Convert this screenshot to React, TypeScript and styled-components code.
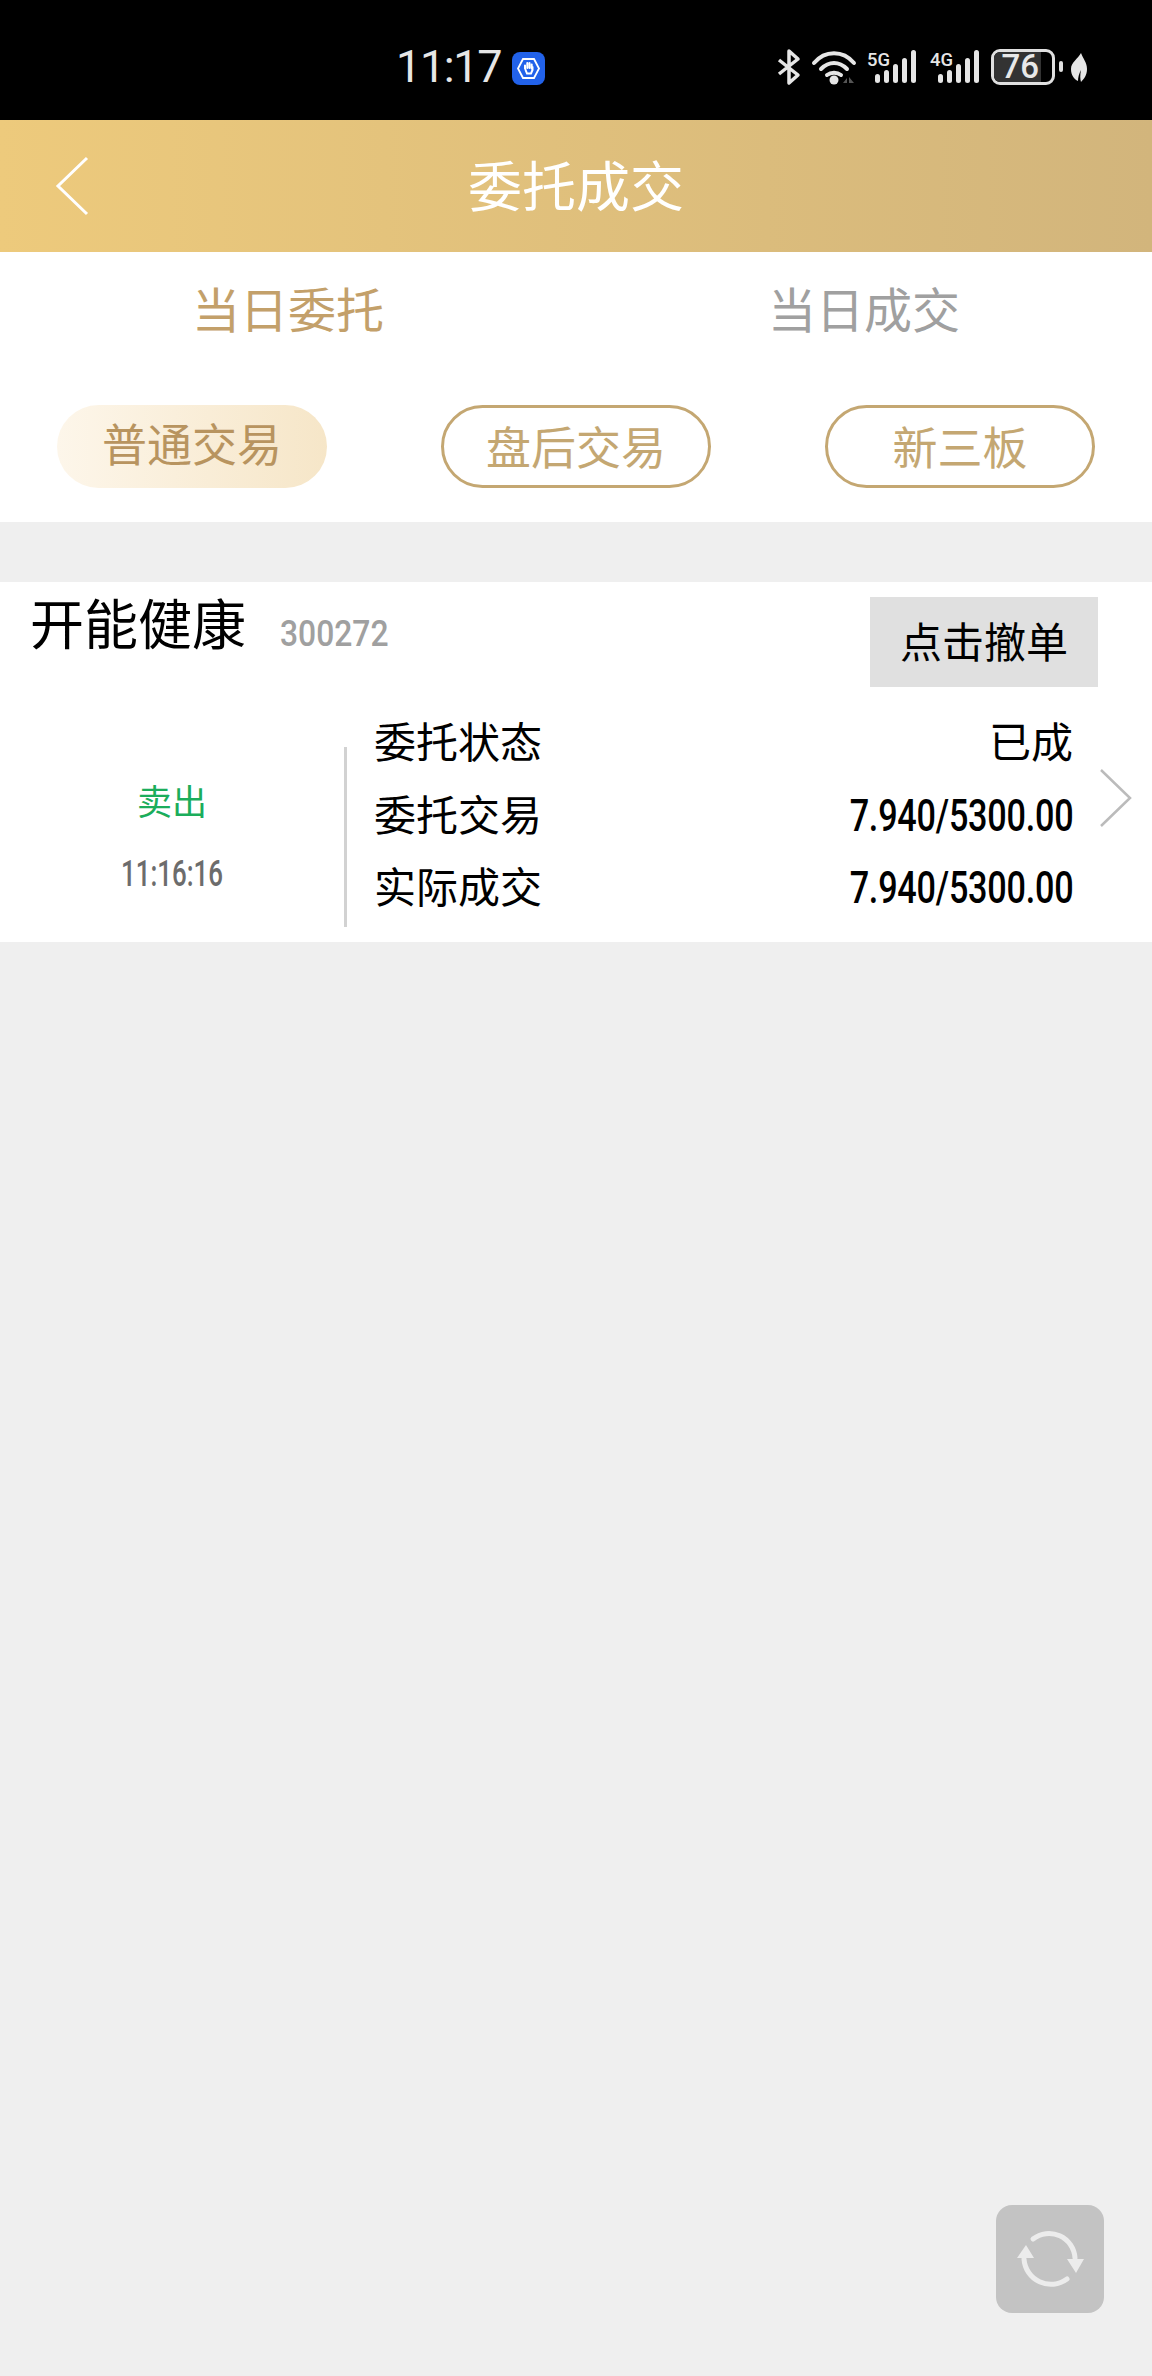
import React from "react";
import styled, { createGlobalStyle } from "styled-components";

const CJK = `"Noto Sans CJK SC", "Noto Sans", sans-serif`;
const DIGITS = `"Roboto", "Noto Sans CJK SC", sans-serif`;

const GlobalStyle = createGlobalStyle`
  html, body {
    margin: 0;
    padding: 0;
    background: #efefef;
    font-family: ${CJK};
  }
`;

const Page = styled.div`
  position: relative;
  width: 1152px;
  height: 2376px;
  background: #efefef;
  overflow: hidden;
`;

const StatusBar = styled.div`
  height: 120px;
  background: #000;
  display: flex;
  align-items: flex-start;
  padding: 49px 0 0 396px;
  box-sizing: border-box;
  color: #e6e6e6;
`;

const Clock = styled.div`
  font-family: "Roboto", sans-serif;
  font-size: 45px;
  line-height: 36px;
  width: 116px;
  letter-spacing: -1.4px;
`;

const AppBadge = styled.div`
  width: 33px;
  height: 33px;
  margin-top: 3px;
  border-radius: 8px;
  background: #2262ea;
  display: flex;
  align-items: center;
  justify-content: center;
`;

const StatusIcons = styled.div`
  margin-left: 232px;
  display: flex;
  align-items: flex-start;
`;

const StatusSvg = styled.svg<{ $ml?: number }>`
  display: block;
  flex: none;
  overflow: visible;
  margin-left: ${(p) => p.$ml ?? 0}px;
`;

const NetworkLabel = styled.text`
  font-family: "Roboto", sans-serif;
  font-size: 19px;
  font-weight: 500;
  fill: #e6e6e6;
`;

const Battery = styled.div`
  margin-left: 11px;
  width: 64px;
  height: 36px;
  box-sizing: border-box;
  border: 3px solid #e0e0e0;
  border-radius: 9px;
  display: flex;
`;

const BatteryLevel = styled.div`
  width: 47px;
  background: #333;
  border-radius: 6px 0 0 6px;
  color: #e8e8e8;
  font-family: "Roboto", sans-serif;
  font-size: 33px;
  font-weight: 500;
  line-height: 30px;
  text-align: right;
  padding-right: 2px;
  box-sizing: border-box;
`;

const Header = styled.header`
  height: 132px;
  background: linear-gradient(90deg, #edca7c 0%, #d2b57c 100%);
  display: flex;
  align-items: center;
  justify-content: center;
  position: relative;
`;

const HeaderTitle = styled.h1`
  margin: -5px 0 0;
  color: #fff;
  font-size: 54px;
  line-height: 60px;
  font-weight: 400;
`;

const BackIcon = styled.svg`
  position: absolute;
  left: 54px;
  top: 36px;
`;

const TopPanel = styled.section`
  background: #fff;
  height: 270px;
`;

const Tabs = styled.div`
  display: grid;
  grid-template-columns: 576px 576px;
  height: 116px;
`;

const Tab = styled.div<{ $active?: boolean }>`
  text-align: center;
  font-size: 48px;
  line-height: 110px;
  color: ${(p) => (p.$active ? "#c3a06a" : "#a0a0a0")};
`;

const Pills = styled.div`
  display: flex;
  justify-content: space-between;
  padding: 37px 57px 0;
`;

const Pill = styled.div<{ $active?: boolean }>`
  width: 270px;
  height: 83px;
  box-sizing: border-box;
  border-radius: 42px;
  font-size: 45px;
  text-align: center;
  color: ${(p) => (p.$active ? "#b8945f" : "#c4a772")};
  line-height: ${(p) => (p.$active ? "76px" : "75px")};
  border: ${(p) => (p.$active ? "none" : "3px solid #c4a772")};
  background: ${(p) =>
    p.$active ? "linear-gradient(90deg, #fdf6ea 0%, #f6e6c8 100%)" : "#fff"};
`;

const Card = styled.section`
  margin-top: 60px;
  height: 360px;
  background: #fff;
`;

const CardTop = styled.div`
  display: flex;
  align-items: flex-start;
  height: 105px;
  padding-left: 30px;
`;

const StockName = styled.div`
  font-size: 54px;
  line-height: 66px;
  margin-top: 7px;
  color: #000;
`;

const StockCode = styled.div`
  font-family: ${DIGITS};
  font-size: 37px;
  font-weight: 500;
  line-height: 44px;
  margin: 30px 0 0 34px;
  color: #a0a0a0;
  transform: scaleX(0.86);
  transform-origin: left center;
`;

const CancelButton = styled.div`
  margin: 15px 54px 0 auto;
  width: 228px;
  height: 90px;
  background: #e0e0e0;
  color: #000;
  font-size: 42px;
  line-height: 86px;
  text-align: center;
`;

const CardBody = styled.div`
  display: flex;
  align-items: flex-start;
`;

const SideColumn = styled.div`
  width: 344px;
  text-align: center;
  padding-top: 90px;
`;

const Direction = styled.div`
  font-size: 35px;
  line-height: 46px;
  color: #1bad5b;
`;

const Time = styled.div`
  font-family: ${DIGITS};
  font-size: 37px;
  font-weight: 500;
  line-height: 44px;
  margin-top: 29px;
  color: #6c6c6c;
  transform: scaleX(0.7);
`;

const Divider = styled.div`
  width: 3px;
  height: 180px;
  margin-top: 60px;
  background: #d2d2d2;
`;

const Rows = styled.div`
  width: 699px;
  margin-left: 27px;
  padding-top: 17px;
`;

const Row = styled.div`
  display: flex;
  justify-content: space-between;
  height: 72.5px;
  line-height: 72px;
  font-size: 42px;
  color: #000;
`;

const Amount = styled.span`
  font-family: ${DIGITS};
  font-size: 45px;
  font-weight: 500;
  margin-top: 3px;
  letter-spacing: -0.3px;
  transform: scaleX(0.76);
  transform-origin: right center;
`;

const Chevron = styled.svg`
  flex: none;
  margin: 81px 0 0 26px;
`;

const RefreshButton = styled.div`
  position: absolute;
  left: 996px;
  top: 2205px;
  width: 108px;
  height: 108px;
  border-radius: 16px;
  background: #c3c3c3;
`;

const SignalBars = ({ label, ml }: { label: string; ml: number }) => (
  <StatusSvg $ml={ml} width="50" height="36" viewBox="0 0 50 36">
    <NetworkLabel x="0" y="17" textLength="23" lengthAdjust="spacingAndGlyphs">
      {label}
    </NetworkLabel>
    <g fill="#e6e6e6">
      <rect x="8" y="25" width="5" height="9" rx="2.5" />
      <rect x="17" y="21" width="5" height="13" rx="2.5" />
      <rect x="26" y="15" width="5" height="19" rx="2.5" />
      <rect x="35" y="9" width="5" height="25" rx="2.5" />
      <rect x="44" y="1" width="5" height="33" rx="2.5" />
    </g>
  </StatusSvg>
);

export default function App() {
  return (
    <Page>
      <GlobalStyle />
      <StatusBar>
        <Clock>11:17</Clock>
        <AppBadge>
          <svg width="25" height="25" viewBox="0 0 25 25">
            <path d="M7 3h11l5 9.500-5 9.500H7L2 12.500z" fill="none" stroke="#fff" strokeWidth="1.800" />
            <path d="M9 12.500V9.500M11.300 12V7M13.500 12V7M15.700 12.500V8.500M9 12.500l2 5h4l1.500-3.500V11" fill="none" stroke="#fff" strokeWidth="2" strokeLinecap="round" />
          </svg>
        </AppBadge>
        <StatusIcons>
          <StatusSvg width="24" height="36" viewBox="0 0 24 36">
            <path d="M2 11l19 15-9 8V2l9 8L2 25" fill="none" stroke="#e6e6e6" strokeWidth="3.500" strokeLinejoin="round" />
          </StatusSvg>
          <StatusSvg $ml={11} width="44" height="36" viewBox="0 0 44 36">
            <g fill="none" stroke="#e6e6e6" strokeWidth="4" strokeLinecap="round">
              <path d="M2 14C13 1 31 1 42 14" />
              <path d="M9 20c8-8 18-8 26 0" />
              <path d="M15 26c4-3 10-3 14 0" />
            </g>
            <circle cx="22" cy="31" r="4.500" fill="#e6e6e6" />
            <path d="M31 34l4-5v5zM37 28l5 6h-5z" fill="#555" />
          </StatusSvg>
          <SignalBars label="5G" ml={11} />
          <SignalBars label="4G" ml={13} />
          <Battery>
            <BatteryLevel>76</BatteryLevel>
          </Battery>
          <StatusSvg $ml={4} width="4" height="36" viewBox="0 0 4 36">
            <rect x="0" y="12" width="4" height="11" rx="2" fill="#e0e0e0" />
          </StatusSvg>
          <StatusSvg $ml={8} width="16" height="36" viewBox="0 0 16 36">
            <path d="M10 4C12 10 16 13 16 20c0 6-3 10-6 13-1-3-1-7 0-12-2 4-3 7-3 11C3 30 0 26 0 20 0 13 7 10 10 4z" fill="#e6e6e6" />
          </StatusSvg>
        </StatusIcons>
      </StatusBar>

      <Header>
        <BackIcon width="36" height="60" viewBox="0 0 36 60">
          <path d="M33 2L4 30l29 28" fill="none" stroke="#fff" strokeWidth="3" />
        </BackIcon>
        <HeaderTitle>委托成交</HeaderTitle>
      </Header>

      <TopPanel>
        <Tabs>
          <Tab $active>当日委托</Tab>
          <Tab>当日成交</Tab>
        </Tabs>
        <Pills>
          <Pill $active>普通交易</Pill>
          <Pill>盘后交易</Pill>
          <Pill>新三板</Pill>
        </Pills>
      </TopPanel>

      <Card>
        <CardTop>
          <StockName>开能健康</StockName>
          <StockCode>300272</StockCode>
          <CancelButton>点击撤单</CancelButton>
        </CardTop>
        <CardBody>
          <SideColumn>
            <Direction>卖出</Direction>
            <Time>11:16:16</Time>
          </SideColumn>
          <Divider />
          <Rows>
            <Row>
              <span>委托状态</span>
              <span>已成</span>
            </Row>
            <Row>
              <span>委托交易</span>
              <Amount>7.940/5300.00</Amount>
            </Row>
            <Row>
              <span>实际成交</span>
              <Amount>7.940/5300.00</Amount>
            </Row>
          </Rows>
          <Chevron width="34" height="60" viewBox="0 0 34 60">
            <path d="M2 2l29 28L2 58" fill="none" stroke="#bbb" strokeWidth="2.500" />
          </Chevron>
        </CardBody>
      </Card>

      <RefreshButton>
        <svg width="108" height="108" viewBox="0 0 108 108">
          <g fill="none" stroke="#ececec" strokeWidth="5" strokeLinecap="round">
            <path d="M37 34A26 26 0 0 1 79 53" />
            <path d="M28 54A27 27 0 0 0 71 74" />
          </g>
          <path d="M21 53l9-13 8 13zM71 54h17l-8 14z" fill="#ececec" />
        </svg>
      </RefreshButton>
    </Page>
  );
}
